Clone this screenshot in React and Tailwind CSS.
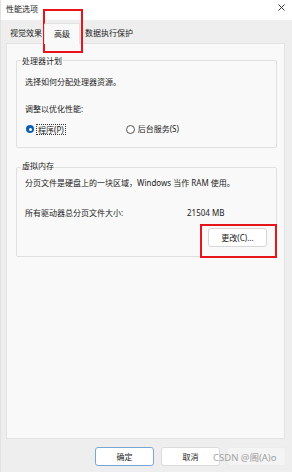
export default function App() {
  return (
    <div className="relative w-[292px] h-[472px] overflow-hidden bg-[#eeeeee] text-[#1b1b1b] font-['Noto_Sans','Noto_Sans_CJK_SC',sans-serif] text-[8px] leading-[10px] border-l border-[#e2e2e2]">
      {/* title bar */}
      <div className="h-[20px] bg-white flex items-center justify-between pl-[5px] pr-[7px]">
        <span className="text-[8px] leading-[10px] mt-[-3px]">性能选项</span>
        <svg width="7" height="7" viewBox="0 0 7 7" className="mt-[-5px]">
          <path d="M0.5 0.5L6.5 6.5M6.5 0.5L0.5 6.5" stroke="#222" strokeWidth="0.9" />
        </svg>
      </div>

      {/* tabs */}
      <div className="h-[23px] flex items-end pl-[5px]">
        <div className="w-[38px] h-[20px] pl-[4px] flex items-center">视觉效果</div>
        <div className="relative z-10 w-[36px] h-[21px] mb-[-1px] flex items-center justify-center bg-[#f9f9f9] border-t border-l border-r border-[#e2e2e2] rounded-t-[2px]">
          高级
        </div>
        <div className="pl-[5px] h-[20px] flex items-center">数据执行保护</div>
      </div>

      {/* panel */}
      <div className="ml-[5px] w-[279px] h-[396px] border border-[#e3e3e3] bg-[#f9f9f9] flex flex-col">
        {/* group 1 */}
        <div className="relative ml-[9px] mt-[16px] w-[261px] h-[88px] border border-[#e0e0e0] rounded-[2px] flex flex-col pl-[8px]">
          <span className="absolute left-[4px] top-[-5px] px-[1px] bg-[#f9f9f9]">处理器计划</span>
          <div className="mt-[16px]">选择如何分配处理器资源。</div>
          <div className="mt-[17px]">调整以优化性能:</div>
          <div className="mt-[9px] h-[12px] flex items-center">
            <span className="w-[8px] h-[8px] rounded-full bg-[#0f5fb0] flex items-center justify-center ml-[1px]">
              <span className="w-[3px] h-[3px] rounded-full bg-white" />
            </span>
            <span className="ml-[2px] px-[1px] border border-dotted border-[#333] leading-[9px]">程序(P)</span>
            <span className="ml-[60px] w-[9px] h-[9px] rounded-full border border-[#555] bg-white" />
            <span className="ml-[3px]">后台服务(S)</span>
          </div>
        </div>

        {/* group 2 */}
        <div className="relative ml-[9px] mt-[19px] w-[261px] h-[90px] border border-[#e0e0e0] rounded-[2px] flex flex-col pl-[8px]">
          <span className="absolute left-[4px] top-[-7px] px-[1px] bg-[#f9f9f9]">虚拟内存</span>
          <div className="mt-[10px]">分页文件是硬盘上的一块区域，Windows 当作 RAM 使用。</div>
          <div className="mt-[20px] flex">
            <span className="w-[162px]">所有驱动器总分页文件大小:</span>
            <span>21504 MB</span>
          </div>
          <div className="mt-[10px] flex justify-end pr-[9px]">
            <button className="w-[59px] h-[19px] bg-white border border-[#d6d6d6] rounded-[3px] flex items-center justify-center text-[8px] leading-[10px]">
              更改(C)...
            </button>
          </div>
        </div>
      </div>

      {/* bottom buttons */}
      <div className="flex justify-end gap-[7px] pr-[6px] pt-[8px]">
        <button className="w-[59px] h-[19px] bg-white border border-[#7aa6d4] rounded-[3px] flex items-center justify-center text-[8px] leading-[10px]">
          确定
        </button>
        <button className="w-[59px] h-[19px] bg-white border border-[#dcdcdc] rounded-[3px] flex items-center justify-center text-[8px] leading-[10px]">
          取消
        </button>
        <button className="w-[59px] h-[19px] bg-[#f4f4f4] border border-[#ececec] rounded-[3px]" />
      </div>

      {/* watermark */}
      <span className="absolute left-[212px] top-[452px] text-[9.5px] leading-[12px] text-[#a3a3a3] whitespace-nowrap">
        CSDN @阁(A)o
      </span>

      {/* red highlight boxes */}
      <div className="absolute left-[42px] top-[9px] w-[40px] h-[44px] border-2 border-[#e8141c]" />
      <div className="absolute left-[199px] top-[224px] w-[77px] h-[34px] border-2 border-[#e8141c]" />
    </div>
  );
}
